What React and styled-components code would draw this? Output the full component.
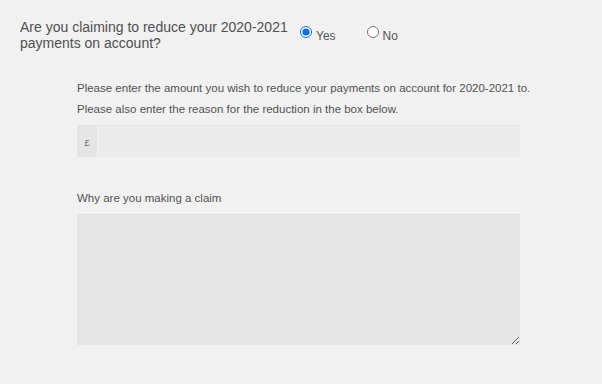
import React, { useState } from 'react';
import styled, { createGlobalStyle } from 'styled-components';

const Global = createGlobalStyle`
	html, body {
		margin: 0;
		background: #f1f1f1;
	}
	body {
		font-family: Arial, "Liberation Sans", sans-serif;
		color: #555;
	}
`

const Page = styled.div`
	width: 602px;
	height: 384px;
	box-sizing: border-box;
	padding: 19px 20px 0 20px;
	background: #f1f1f1;
	overflow: hidden;
`

const QuestionRow = styled.div`
	display: flex;
	align-items: flex-start;
`

const Question = styled.div`
	width: 280px;
	font-size: 14px;
	line-height: 16px;
	color: #505050;
`

const Options = styled.div`
	display: flex;
	gap: 31px;
	padding-top: 6px;
`

const Option = styled.label`
	display: flex;
	align-items: flex-start;
	font-size: 12px;
	color: #555;
	cursor: pointer;
`

const Radio = styled.input`
	width: 12px;
	height: 12px;
	margin: 1px 4px 0 0;
	accent-color: #0b6cf0;
`

const OptionText = styled.span`
	padding-top: 4px;
`

const Details = styled.div`
	margin: 27px 0 0 57px;
	width: 443px;
`

const Note = styled.p`
	margin: 0;
	font-size: 11.5px;
	line-height: 21px;
	color: #525252;
	white-space: nowrap;
`

const InputGroup = styled.div`
	display: flex;
	height: 32px;
	margin-top: 5px;
	border-top: 1px solid #e4e4e4;
	box-sizing: border-box;
`

const Addon = styled.span`
	width: 20px;
	display: flex;
	align-items: center;
	justify-content: center;
	background: #e5e5e5;
	font-size: 9px;
	color: #666;
	padding-top: 2px;
`

const TextInput = styled.input`
	flex: 1;
	border: none;
	outline: none;
	margin-left: 1px;
	background: #ebebeb;
	font: inherit;
`

const Label = styled.div`
	margin-top: 35px;
	font-size: 11.5px;
	color: #525252;
`

const TextArea = styled.textarea`
	display: block;
	width: 443px;
	height: 131px;
	margin-top: 10px;
	box-sizing: border-box;
	border: none;
	border-top: 1px solid #dedede;
	outline: none;
	background: #e6e6e6;
	resize: both;
	font: inherit;
`

const App = () => {
	const [claim, setClaim] = useState('yes');

	return (
		<>
			<Global/>
			<Page>
				<QuestionRow>
					<Question>Are you claiming to reduce your 2020-2021 payments on account?</Question>
					<Options>
						<Option>
							<Radio type="radio" name="claim" checked={claim === 'yes'} onChange={() => setClaim('yes')}/>
							<OptionText>Yes</OptionText>
						</Option>
						<Option>
							<Radio type="radio" name="claim" checked={claim === 'no'} onChange={() => setClaim('no')}/>
							<OptionText>No</OptionText>
						</Option>
					</Options>
				</QuestionRow>
				{claim === 'yes' &&
					<Details>
						<Note>Please enter the amount you wish to reduce your payments on account for 2020-2021 to.</Note>
						<Note>Please also enter the reason for the reduction in the box below.</Note>
						<InputGroup>
							<Addon>£</Addon>
							<TextInput/>
						</InputGroup>
						<Label>Why are you making a claim</Label>
						<TextArea/>
					</Details>
				}
			</Page>
		</>
	);
};

export default App;
